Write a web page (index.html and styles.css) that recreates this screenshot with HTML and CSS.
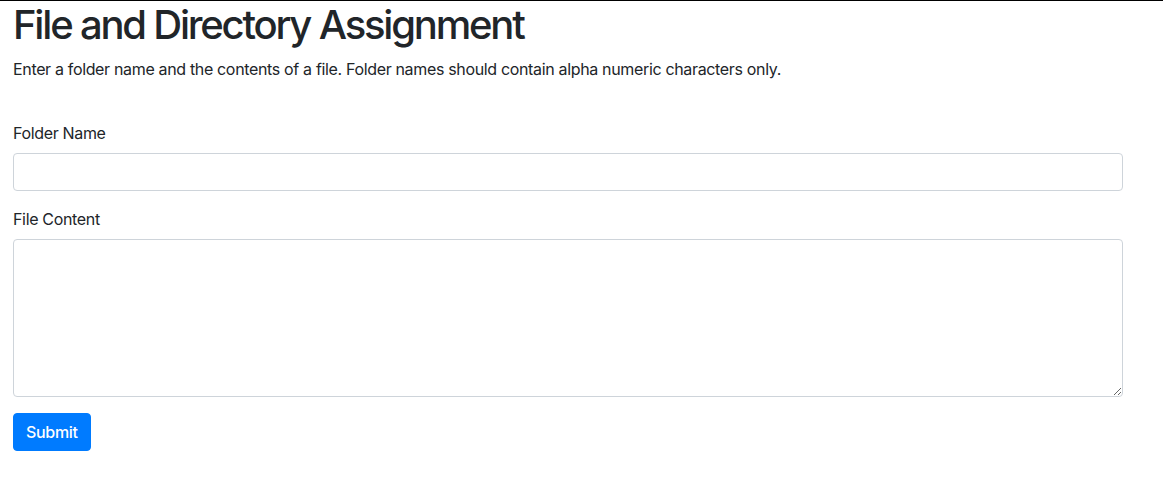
FILE: index.html
```html
<!DOCTYPE html>
<html lang="en">
<head>
<meta charset="utf-8">
<title>File and Directory Assignment</title>
<link rel="stylesheet" href="styles.css">
</head>
<body>
<div class="topline"></div>
<main class="container">
  <h1 class="title">File and Directory Assignment</h1>
  <p class="lead-text">Enter a folder name and the contents of a file. Folder names should contain alpha numeric characters only.</p>
  <form class="form">
    <div class="form-group">
      <label class="form-label" for="folder">Folder Name</label>
      <input class="form-control" id="folder" type="text">
    </div>
    <div class="form-group">
      <label class="form-label" for="content">File Content</label>
      <textarea class="form-control form-textarea" id="content"></textarea>
    </div>
    <button class="btn-primary" type="submit">Submit</button>
  </form>
</main>
</body>
</html>
```

FILE: styles.css
```css
* { box-sizing: border-box; }
html, body { margin: 0; padding: 0; }
body {
  font-family: Inter, "Noto Sans", "Liberation Sans", sans-serif;
  font-size: 16px;
  line-height: 1.5;
  color: #212529;
  background: #fff;
  letter-spacing: -0.34px;
}
.topline {
  height: 1px;
  background: #000;
  margin-right: 4px;
}
.container {
  width: 1110px;
  margin-left: 13px;
}
.title {
  margin: 0 0 8px;
  font-size: 40px;
  font-weight: 500;
  line-height: 1.2;
  letter-spacing: -2.2px;
}
.lead-text {
  margin: 0 0 24px;
  font-size: 16px;
}
.form {
  padding-top: 16px;
}
.form-group {
  margin-bottom: 16px;
}
.form-label {
  display: inline-block;
  margin-bottom: 8px;
  font-size: 16px;
}
.form-control {
  display: block;
  width: 100%;
  height: 38px;
  padding: 6px 12px;
  font-family: inherit;
  font-size: 16px;
  line-height: 1.5;
  color: #495057;
  background: #fff;
  border: 1px solid #ced4da;
  border-radius: 4px;
  margin: 0;
}
.form-textarea {
  height: 158px;
  resize: vertical;
}
.btn-primary {
  display: inline-block;
  height: 38px;
  padding: 6px 12px;
  font-family: inherit;
  font-size: 16px;
  font-weight: 500;
  line-height: 1.5;
  letter-spacing: -0.3px;
  color: #fff;
  background: #007bff;
  border: 1px solid #007bff;
  border-radius: 4px;
}
```
